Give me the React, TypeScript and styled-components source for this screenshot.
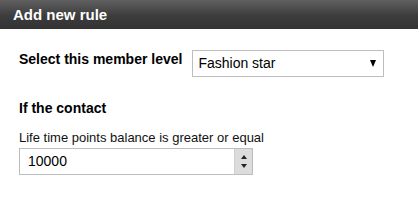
import React from "react";
import styled, { createGlobalStyle } from "styled-components";

const GlobalStyle = createGlobalStyle`
  body {
    margin: 0;
    background: #fff;
    font-family: "Liberation Sans", Arial, sans-serif;
    color: #000;
  }
`;

const Header = styled.div`
  height: 29px;
  background: linear-gradient(to bottom, #606060 0%, #3c3c3c 55%, #333 100%);
  display: flex;
  align-items: center;
  padding-left: 13px;
  padding-bottom: 1px;
  box-sizing: border-box;
`;

const Title = styled.h1`
  margin: 0;
  font-size: 15px;
  font-weight: bold;
  color: #fff;
`;

const Body = styled.div`
  padding: 21px 19px 0;
`;

const LevelRow = styled.div`
  display: flex;
  align-items: flex-start;
  gap: 10px;
`;

const BoldLabel = styled.div`
  font-size: 14px;
  line-height: 16px;
  font-weight: bold;
  padding-top: 1px;
`;

const SelectBox = styled.div`
  width: 192px;
  height: 27px;
  box-sizing: border-box;
  border: 1px solid #bdbdbd;
  display: flex;
  align-items: center;
  justify-content: space-between;
  padding: 0 7px 1px 5px;
  font-size: 14px;
`;

const Arrow = styled.span`
  width: 0;
  height: 0;
  border-left: 3.5px solid transparent;
  border-right: 3.5px solid transparent;
  border-top: 7px solid #000;
`;

const Section = styled.div`
  margin-top: 23px;
  font-size: 14px;
  line-height: 16px;
  font-weight: bold;
`;

const FieldLabel = styled.div`
  margin-top: 14px;
  font-size: 13px;
  line-height: 15px;
  color: #111;
`;

const NumberBox = styled.div`
  margin-top: 3px;
  width: 234px;
  height: 27px;
  box-sizing: border-box;
  border: 1px solid #bdbdbd;
  display: flex;
`;

const NumberInput = styled.input`
  flex: 1;
  border: none;
  outline: none;
  font-family: inherit;
  font-size: 14px;
  padding: 0 0 1px 8px;
  min-width: 0;
  color: #000;
`;

const Spinner = styled.div`
  width: 17px;
  background: #dcdcdc;
  border-left: 1px solid #cfcfcf;
  display: flex;
  flex-direction: column;
  align-items: center;
  justify-content: space-around;
  padding: 3px 0;
`;

const SpinTri = styled.span<{ $up?: boolean }>`
  width: 0;
  height: 0;
  border-left: 3px solid transparent;
  border-right: 3px solid transparent;
  ${(p) => (p.$up ? "border-bottom: 4px solid #222;" : "border-top: 4px solid #222;")}
`;

export default function App() {
  return (
    <>
      <GlobalStyle />
      <Header>
        <Title>Add new rule</Title>
      </Header>
      <Body>
        <LevelRow>
          <BoldLabel>Select this member level</BoldLabel>
          <SelectBox>
            <span>Fashion star</span>
            <Arrow />
          </SelectBox>
        </LevelRow>
        <Section>If the contact</Section>
        <FieldLabel>Life time points balance is greater or equal</FieldLabel>
        <NumberBox>
          <NumberInput defaultValue="10000" />
          <Spinner>
            <SpinTri $up />
            <SpinTri />
          </Spinner>
        </NumberBox>
      </Body>
    </>
  );
}
